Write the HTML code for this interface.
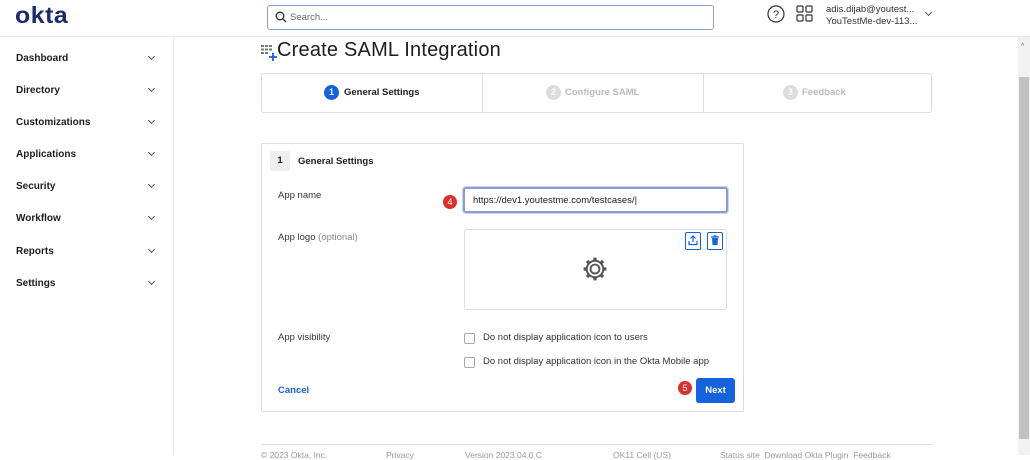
<!DOCTYPE html>
<html><head><style>
*{box-sizing:border-box;margin:0;padding:0}
body{width:1030px;height:455px;overflow:hidden;background:#fff;font-family:"Liberation Sans",sans-serif;color:#1d1d21;position:relative}
.a{position:absolute}
.nav{font-size:10px;font-weight:bold;left:16px}
.chev{position:absolute;left:149px;width:5px;height:5px;border-right:1.2px solid #555;border-bottom:1.2px solid #555;transform:rotate(45deg)}
.lbl{font-size:9.5px;color:#333}
.cb{width:11px;height:11px;border:1px solid #aaa;border-radius:2px}
.badge{width:14px;height:14px;border-radius:50%;background:#d93030;color:#fff;font-size:9px;text-align:center;line-height:14px}
</style></head><body>
<div class="a" style="left:0;top:0;width:1030px;height:37px;border-bottom:1px solid #e6e6e6"></div>
<div class="a" style="left:15px;top:2px;font-size:23px;font-weight:bold;color:#1a2b6d;letter-spacing:0.5px;transform:scaleX(1.08);transform-origin:left">okta</div>
<div class="a" style="left:267px;top:5px;width:447px;height:25px;border:1px solid #8a9cd6;border-radius:3px"></div>
<svg class="a" style="left:275px;top:11px" width="12" height="12" viewBox="0 0 12 12"><circle cx="5" cy="5" r="3.8" fill="none" stroke="#333" stroke-width="1.3"/><path d="M8 8l3 3" stroke="#333" stroke-width="1.4"/></svg>
<div class="a" style="left:290px;top:12px;font-size:9.5px;color:#666">Search...</div>
<svg class="a" style="left:767px;top:5px" width="18" height="18" viewBox="0 0 18 18"><circle cx="9" cy="9" r="8" fill="none" stroke="#333" stroke-width="1.2"/><text x="9" y="13" font-size="11" text-anchor="middle" fill="#333" font-family="Liberation Sans">?</text></svg>
<svg class="a" style="left:796px;top:5px" width="17" height="17" viewBox="0 0 17 17" fill="none" stroke="#333" stroke-width="1.2"><rect x="1" y="1" width="6" height="6" rx="1"/><rect x="10" y="1" width="6" height="6" rx="1"/><rect x="1" y="10" width="6" height="6" rx="1"/><rect x="10" y="10" width="6" height="6" rx="1"/></svg>
<div class="a" style="left:826px;top:4px;font-size:9.5px;line-height:12px;color:#333">adis.dijab@youtest...<br>YouTestMe-dev-113...</div>
<div class="a chev" style="left:926px;top:10px"></div>
<div class="a" style="left:173px;top:37px;width:1px;height:418px;background:#e6e6e6"></div>
<div class="a nav" style="top:53px">Dashboard</div><div class="chev" style="top:54px"></div>
<div class="a nav" style="top:85px">Directory</div><div class="chev" style="top:86px"></div>
<div class="a nav" style="top:117px">Customizations</div><div class="chev" style="top:118px"></div>
<div class="a nav" style="top:149px">Applications</div><div class="chev" style="top:150px"></div>
<div class="a nav" style="top:181px">Security</div><div class="chev" style="top:182px"></div>
<div class="a nav" style="top:213px">Workflow</div><div class="chev" style="top:214px"></div>
<div class="a nav" style="top:246px">Reports</div><div class="chev" style="top:247px"></div>
<div class="a nav" style="top:278px">Settings</div><div class="chev" style="top:279px"></div>
<svg class="a" style="left:261px;top:45px" width="16" height="16" viewBox="0 0 16 16"><g fill="#777"><rect x="0" y="0" width="3" height="2"/><rect x="4" y="0" width="3" height="2"/><rect x="8" y="0" width="3" height="2"/><rect x="0" y="3.5" width="3" height="2"/><rect x="4" y="3.5" width="3" height="2"/><rect x="8" y="3.5" width="3" height="2"/><rect x="0" y="7" width="3" height="2"/><rect x="4" y="7" width="3" height="2"/></g><path d="M12 8v8M8 12h8" stroke="#1662dd" stroke-width="1.8"/></svg>
<div class="a" style="left:277px;top:39px;font-size:20px;color:#1d1d21;letter-spacing:0.2px">Create SAML Integration</div>
<div class="a" style="left:261px;top:73px;width:671px;height:40px;border:1px solid #ddd;border-radius:3px"></div>
<div class="a" style="left:482px;top:74px;width:1px;height:38px;background:#ddd"></div>
<div class="a" style="left:703px;top:74px;width:1px;height:38px;background:#ddd"></div>
<div class="a" style="left:324px;top:85px;width:15px;height:15px;border-radius:50%;background:#1662dd;color:#fff;font-size:9px;font-weight:bold;text-align:center;line-height:15px">1</div>
<div class="a" style="left:344px;top:87px;font-size:9.5px;font-weight:bold">General Settings</div>
<div class="a" style="left:546px;top:85px;width:15px;height:15px;border-radius:50%;background:#ddd;color:#fff;font-size:9px;font-weight:bold;text-align:center;line-height:15px">2</div>
<div class="a" style="left:565px;top:87px;font-size:9.5px;font-weight:bold;color:#bbb">Configure SAML</div>
<div class="a" style="left:783px;top:85px;width:15px;height:15px;border-radius:50%;background:#ddd;color:#fff;font-size:9px;font-weight:bold;text-align:center;line-height:15px">3</div>
<div class="a" style="left:802px;top:87px;font-size:9.5px;font-weight:bold;color:#bbb">Feedback</div>
<div class="a" style="left:261px;top:143px;width:483px;height:269px;border:1px solid #ddd;border-radius:2px"></div>
<div class="a" style="left:270px;top:151px;width:20px;height:20px;background:#eee;border-radius:2px;font-size:9.5px;font-weight:bold;text-align:center;line-height:20px">1</div>
<div class="a" style="left:298px;top:156px;font-size:9.5px;font-weight:bold">General Settings</div>
<div class="a lbl" style="left:278px;top:190px">App name</div>
<div class="a badge" style="left:443px;top:195px">4</div>
<div class="a" style="left:463px;top:187px;width:265px;height:26px;border:2px solid #8a9cd6;border-radius:3px;box-shadow:0 0 0 1px #c9d3f0"></div>
<div class="a lbl" style="left:473px;top:195px;color:#222">https://dev1.youtestme.com/testcases/|</div>
<div class="a lbl" style="left:278px;top:232px">App logo <span style="color:#888">(optional)</span></div>
<div class="a" style="left:464px;top:229px;width:263px;height:81px;border:1px solid #ddd;border-radius:3px"></div>
<div class="a" style="left:685px;top:232px;width:16px;height:18px;border:1px solid #1662dd;border-radius:2px"></div>
<svg class="a" style="left:688px;top:235px" width="10" height="11" viewBox="0 0 10 11"><path d="M5 7V1M2.5 3.5L5 1l2.5 2.5M1 6v3.5h8V6" fill="none" stroke="#1662dd" stroke-width="1.2"/></svg>
<div class="a" style="left:707px;top:232px;width:16px;height:18px;border:1px solid #1662dd;border-radius:2px"></div>
<svg class="a" style="left:710px;top:235px" width="10" height="11" viewBox="0 0 10 11"><path d="M1 2h8M3.5 1h3" stroke="#1662dd" stroke-width="1.2"/><path d="M2 3h6l-.5 7h-5z" fill="#1662dd"/></svg>
<svg class="a" style="left:582px;top:256px" width="26" height="26" viewBox="0 0 24 24"><g stroke="#555" stroke-width="3"><path d="M12 1.5v21M1.5 12h21M4.6 4.6l14.8 14.8M19.4 4.6L4.6 19.4"/></g><circle cx="12" cy="12" r="8.5" fill="#555"/><circle cx="12" cy="12" r="6.7" fill="#fff"/><circle cx="12" cy="12" r="5" fill="#555"/><circle cx="12" cy="12" r="3.3" fill="#fff"/></svg>
<div class="a lbl" style="left:278px;top:332px">App visibility</div>
<div class="a cb" style="left:464px;top:333px"></div>
<div class="a lbl" style="left:483px;top:332px">Do not display application icon to users</div>
<div class="a cb" style="left:464px;top:357px"></div>
<div class="a lbl" style="left:483px;top:356px">Do not display application icon in the Okta Mobile app</div>
<div class="a" style="left:278px;top:385px;font-size:9.5px;font-weight:bold;color:#1662dd">Cancel</div>
<div class="a badge" style="left:678px;top:381px">5</div>
<div class="a" style="left:696px;top:378px;width:39px;height:25px;background:#1662dd;border-radius:3px;color:#fff;font-size:9.5px;font-weight:bold;text-align:center;line-height:25px">Next</div>
<div class="a" style="left:261px;top:444px;width:671px;height:1px;background:#ddd"></div>
<div class="a" style="left:261px;top:450px;font-size:8.5px;color:#999">© 2023 Okta, Inc.</div>
<div class="a" style="left:386px;top:450px;font-size:8.5px;color:#999">Privacy</div>
<div class="a" style="left:465px;top:450px;font-size:8.5px;color:#999">Version 2023.04.0 C</div>
<div class="a" style="left:613px;top:450px;font-size:8.5px;color:#999">OK11 Cell (US)</div>
<div class="a" style="left:720px;top:450px;font-size:8.5px;color:#999">Status site &nbsp;Download Okta Plugin &nbsp;Feedback</div>
<div class="a" style="left:1018px;top:37px;width:12px;height:418px;background:#f1f1f1"></div>
<div class="a" style="left:1019px;top:77px;width:10px;height:362px;background:#c1c1c1"></div>
<div class="a" style="left:1021px;top:43px;font-size:7px;color:#666">^</div>
</body></html>
